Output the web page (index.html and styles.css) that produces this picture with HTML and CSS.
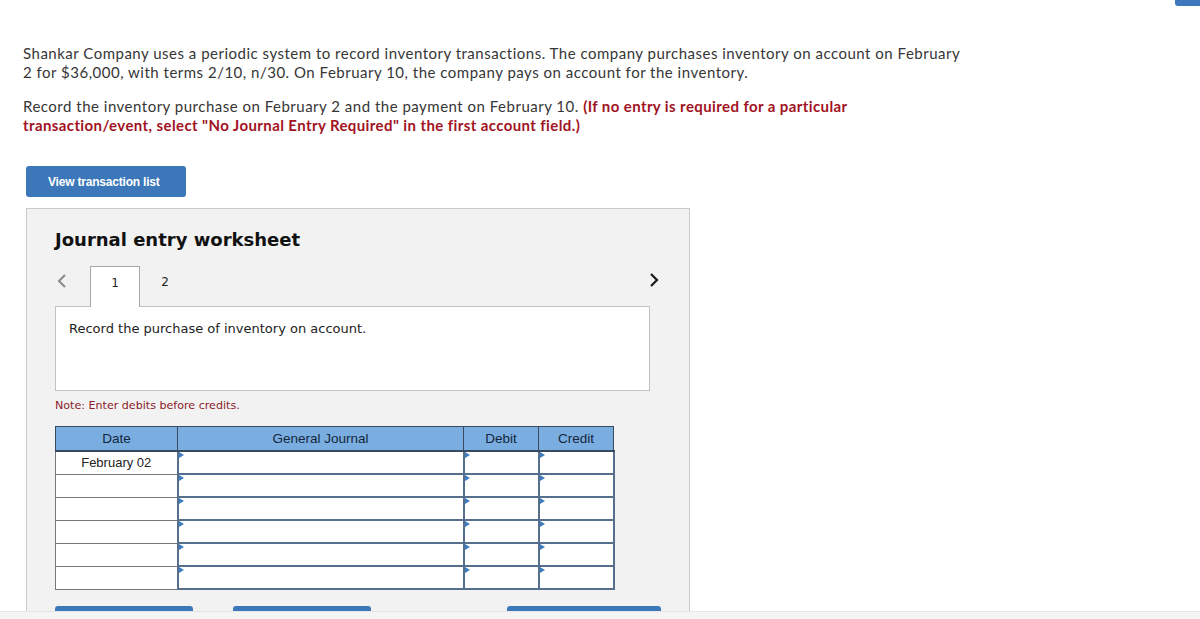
FILE: index.html
```html
<!DOCTYPE html>
<html>
<head>
<meta charset="utf-8">
<link rel="stylesheet" href="styles.css">
</head>
<body>
<div class="viewport">
  <div class="corner-tab"></div>
  <div class="page">
    <p class="intro">Shankar Company uses a periodic system to record inventory transactions. The company purchases inventory on account on February 2 for $36,000, with terms 2/10, n/30. On February 10, the company pays on account for the inventory.</p>
    <p class="intro">Record the inventory purchase on February 2 and the payment on February 10. <strong class="warn">(If no entry is required for a particular transaction/event, select "No Journal Entry Required" in the first account field.)</strong></p>
    <button class="btn-view">View transaction list</button>
    <div class="panel">
      <h2 class="panel-title">Journal entry worksheet</h2>
      <div class="tabbar">
        <span class="arrow arrow-left">
          <svg width="10" height="16" viewBox="0 0 10 16"><path d="M8 2 L2 8 L8 14" fill="none" stroke="#8a8a8a" stroke-width="2"/></svg>
        </span>
        <span class="tab active">1</span>
        <span class="tab">2</span>
        <span class="spacer"></span>
        <span class="arrow arrow-right">
          <svg width="10" height="16" viewBox="0 0 10 16"><path d="M2 2 L8 8 L2 14" fill="none" stroke="#1a1a1a" stroke-width="2.2"/></svg>
        </span>
      </div>
      <div class="desc">Record the purchase of inventory on account.</div>
      <div class="note">Note: Enter debits before credits.</div>
      <table class="journal">
        <thead>
          <tr><th class="c-date">Date</th><th class="c-gj">General Journal</th><th class="c-amt">Debit</th><th class="c-amt">Credit</th></tr>
        </thead>
        <tbody>
          <tr><td class="date">February 02</td><td class="inp"><i></i></td><td class="inp"><i></i></td><td class="inp"><i></i></td></tr>
          <tr><td class="date"></td><td class="inp"><i></i></td><td class="inp"><i></i></td><td class="inp"><i></i></td></tr>
          <tr><td class="date"></td><td class="inp"><i></i></td><td class="inp"><i></i></td><td class="inp"><i></i></td></tr>
          <tr><td class="date"></td><td class="inp"><i></i></td><td class="inp"><i></i></td><td class="inp"><i></i></td></tr>
          <tr><td class="date"></td><td class="inp"><i></i></td><td class="inp"><i></i></td><td class="inp"><i></i></td></tr>
          <tr><td class="date"></td><td class="inp"><i></i></td><td class="inp"><i></i></td><td class="inp"><i></i></td></tr>
        </tbody>
      </table>
      <div class="actions">
        <span class="act act1"></span>
        <span class="act act2"></span>
        <span class="act act3"></span>
      </div>
    </div>
  </div>
</div>
<div class="bottom-strip"></div>
</body>
</html>
```

FILE: styles.css
```css
html, body {
  margin: 0;
  padding: 0;
  background: #fff;
}
.viewport {
  position: relative;
  height: 611px;
  overflow: hidden;
}
.corner-tab {
  position: absolute;
  top: 0;
  right: 0;
  width: 25px;
  height: 6px;
  background: #3d78bd;
  border-radius: 0 0 0 3px;
}
.page {
  padding: 44px 0 0 23px;
}
.intro {
  margin: 0 0 16px 0;
  width: 945px;
  font-family: "Lato", "Liberation Sans", sans-serif;
  font-size: 15px;
  letter-spacing: 0.5px;
  line-height: 18.5px;
  color: #363636;
}
.warn {
  color: #a11323;
  font-weight: 700;
  letter-spacing: 0.4px;
}
.btn-view {
  display: block;
  margin: 32px 0 0 3px;
  width: 160px;
  height: 31px;
  padding: 0 0 0 22px;
  text-align: left;
  background: #3b77b9;
  border: none;
  border-radius: 3px;
  color: #fff;
  font-family: "Liberation Sans", Arial, sans-serif;
  font-size: 12px;
  font-weight: 700;
  letter-spacing: -0.2px;
}
.panel {
  margin: 11px 0 0 3px;
  width: 634px;
  height: 420px;
  background: #f2f2f2;
  border: 1px solid #cbcbcb;
  padding: 0 0 0 28px;
}
.panel-title {
  margin: 20px 0 0 0;
  font-family: "DejaVu Sans", Verdana, sans-serif;
  font-size: 18px;
  font-weight: 700;
  line-height: 22px;
  color: #111;
}
.tabbar {
  display: flex;
  align-items: flex-end;
  width: 604px;
  height: 40px;
  margin-top: 15px;
}
.arrow {
  display: flex;
  align-items: center;
  height: 30px;
  align-self: flex-start;
}
.arrow-left {
  width: 35px;
  padding-left: 2px;
  box-sizing: border-box;
}
.arrow-right {
  margin-top: -1px;
}
.spacer { flex: 1; }
.tab {
  width: 50px;
  height: 40px;
  box-sizing: border-box;
  display: flex;
  align-items: center;
  justify-content: center;
  padding-bottom: 8px;
  font-family: "DejaVu Sans", Verdana, sans-serif;
  font-size: 12px;
  color: #222;
}
.tab.active {
  background: #fff;
  border: 1px solid #a8a8a8;
  border-bottom: none;
  position: relative;
  z-index: 1;
  margin-bottom: -1px;
  height: 41px;
}
.desc {
  width: 595px;
  height: 85px;
  box-sizing: border-box;
  background: #fff;
  border: 1px solid #c2c2c2;
  padding: 14px 13px;
  font-family: "DejaVu Sans", Verdana, sans-serif;
  font-size: 13px;
  color: #222;
}
.note {
  margin-top: 8px;
  font-family: "DejaVu Sans", Verdana, sans-serif;
  font-size: 11.1px;
  color: #8a1c2b;
}
.journal {
  margin-top: 14px;
  border-collapse: collapse;
  font-family: "Liberation Sans", Arial, sans-serif;
  font-size: 13.5px;
  table-layout: fixed;
}
.journal th {
  height: 23px;
  background: #7aaee0;
  border: 1px solid #3a4a5e;
  border-bottom: 2px solid #3a4a5e;
  font-weight: 400;
  color: #15263d;
  padding: 0;
}
.c-date { width: 121px; }
.c-gj { width: 285px; }
.c-amt { width: 74px; }
.journal td {
  height: 21px;
  padding: 0;
}
.journal td.date {
  background: #fff;
  border: 1px solid #777;
  text-align: center;
  color: #222;
  font-size: 13px;
}
.journal td.inp {
  background: #fff;
  border: 2px solid #566f8c;
  position: relative;
}
.journal td.inp i {
  position: absolute;
  top: 0;
  left: 0;
  width: 0;
  height: 0;
  border-top: 3px solid transparent;
  border-bottom: 3px solid transparent;
  border-left: 5px solid #3d7dc0;
}
.actions {
  display: flex;
  margin-top: 16px;
}
.act {
  height: 10px;
  background: #3b77b9;
  border-radius: 3px 3px 0 0;
}
.act1 { width: 138px; }
.act2 { width: 138px; margin-left: 40px; }
.act3 { width: 154px; margin-left: 136px; }
.bottom-strip {
  height: 8px;
  background: #f5f5f5;
  border-top: 1px solid #e6e6e6;
}
```
